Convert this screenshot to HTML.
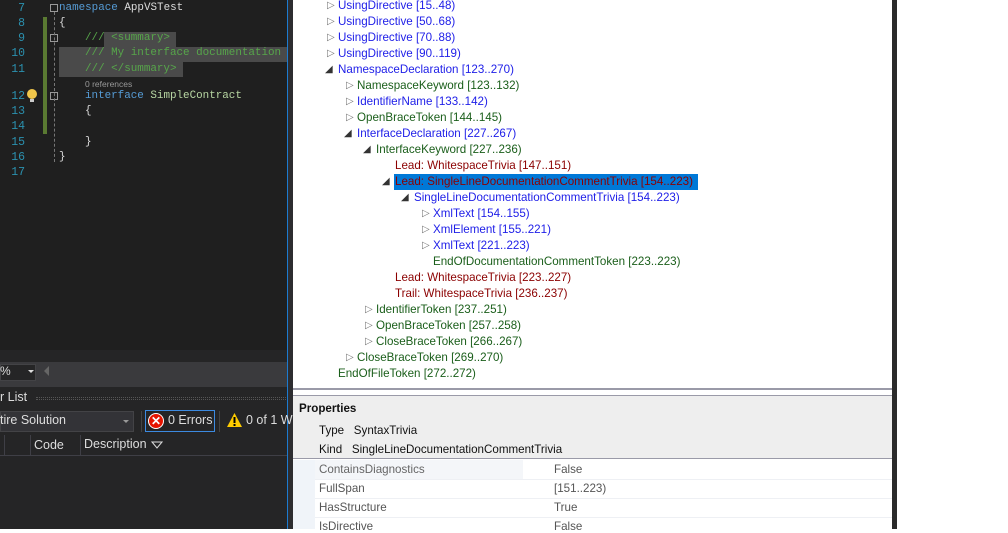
<!DOCTYPE html>
<html><head><meta charset="utf-8"><style>
*{margin:0;padding:0;box-sizing:border-box}
body{width:1008px;height:529px;overflow:hidden;background:#fff;position:relative;font-family:"Liberation Sans",sans-serif}
.a{position:absolute;white-space:nowrap}
.code{font-family:"Liberation Mono",monospace;font-size:10.9px;line-height:15px}
.ln{color:#2b91af;text-align:right;width:25px;font-size:11.5px}
.t{font-size:11.6px;line-height:16px;height:16px;margin-top:1px}
.b{color:#2020e8}.g{color:#1a5e1a}.r{color:#8b0000}
.tri{position:absolute;font-size:10px;color:#777;left:0}
.p{font-size:11.6px;color:#111}
</style></head><body>
<div class="a" style="left:0;top:0;width:287px;height:529px;background:#1f1f1f"></div>
<div class="a" style="left:287px;top:0;width:1px;height:529px;background:#1c7bd0"></div>
<div class="a" style="left:288px;top:0;width:5px;height:529px;background:#2d2d30"></div>
<div class="a" style="left:43px;top:17px;width:4px;height:117px;background:#5a7a32"></div>
<div class="a code ln" style="left:0;top:1px">7</div>
<div class="a code ln" style="left:0;top:16px">8</div>
<div class="a code ln" style="left:0;top:31px">9</div>
<div class="a code ln" style="left:0;top:46px">10</div>
<div class="a code ln" style="left:0;top:62px">11</div>
<div class="a code ln" style="left:0;top:89px">12</div>
<div class="a code ln" style="left:0;top:104px">13</div>
<div class="a code ln" style="left:0;top:119px">14</div>
<div class="a code ln" style="left:0;top:135px">15</div>
<div class="a code ln" style="left:0;top:150px">16</div>
<div class="a code ln" style="left:0;top:165px">17</div>
<div class="a" style="left:27px;top:89px;width:10px;height:10px;border-radius:50%;background:#f0c64a"></div>
<div class="a" style="left:30px;top:99px;width:4px;height:3px;background:#ccc"></div>
<div class="a" style="left:50px;top:4px;width:8px;height:8px;border:1px solid #999"></div>
<div class="a" style="left:50px;top:34px;width:8px;height:8px;border:1px solid #999"></div>
<div class="a" style="left:50px;top:92px;width:8px;height:8px;border:1px solid #999"></div>
<div class="a" style="left:54px;top:12px;width:1px;height:150px;border-left:1px dashed #777"></div>
<div class="a" style="left:104px;top:32px;width:72px;height:15px;background:#4a4a4a"></div>
<div class="a" style="left:59px;top:47px;width:228px;height:15px;background:#4a4a4a"></div>
<div class="a" style="left:59px;top:62px;width:124px;height:15px;background:#4a4a4a"></div>
<div class="a code" style="left:59px;top:1px;color:#dcdcdc"><span style="color:#569cd6">namespace</span> AppVSTest</div>
<div class="a code" style="left:59px;top:16px;color:#dcdcdc">{</div>
<div class="a code" style="left:85px;top:31px;color:#57a64a">/// &lt;summary&gt;</div>
<div class="a code" style="left:85px;top:46px;color:#57a64a">/// My interface documentation</div>
<div class="a code" style="left:85px;top:62px;color:#57a64a">/// &lt;/summary&gt;</div>
<div class="a" style="left:85px;top:79px;font-size:8.5px;color:#999">0 references</div>
<div class="a code" style="left:85px;top:89px;color:#dcdcdc"><span style="color:#569cd6">interface</span> <span style="color:#b8d7a3">SimpleContract</span></div>
<div class="a code" style="left:85px;top:104px;color:#dcdcdc">{</div>
<div class="a code" style="left:85px;top:135px;color:#dcdcdc">}</div>
<div class="a code" style="left:59px;top:150px;color:#dcdcdc">}</div>
<div class="a" style="left:0;top:350px;width:287px;height:12px;background:#252526"></div>
<div class="a" style="left:0;top:362px;width:287px;height:25px;background:#3a3a3d"></div>
<div class="a" style="left:0;top:364px;width:36px;height:17px;background:#252526;border:1px solid #434346"></div>
<div class="a" style="left:0;top:364px;color:#ddd;font-size:12px">%</div>
<div class="a" style="left:28px;top:370px;border:3px solid transparent;border-top:3px solid #ddd"></div>
<div class="a" style="left:44px;top:366px;border:5px solid transparent;border-right:5px solid #666;border-left:0"></div>
<div class="a" style="left:0;top:387px;width:287px;height:142px;background:#252526"></div>
<div class="a" style="left:0;top:390px;color:#ddd;font-size:12.5px">r List</div>
<div class="a" style="left:36px;top:397px;width:250px;height:3px;border-top:1px dotted #555;border-bottom:1px dotted #555"></div>
<div class="a" style="left:0;top:411px;width:134px;height:21px;background:#333337;border:1px solid #434346"></div>
<div class="a" style="left:0;top:413px;color:#ddd;font-size:12.5px">tire Solution</div>
<div class="a" style="left:123px;top:420px;border:3px solid transparent;border-top:3px solid #999"></div>
<div class="a" style="left:141px;top:411px;width:1px;height:21px;background:#444"></div>
<div class="a" style="left:145px;top:410px;width:70px;height:22px;border:1px solid #3c8ae0"></div>
<div class="a" style="left:148px;top:413px;width:16px;height:16px;border-radius:50%;background:#e51400;border:1px solid #fff;color:#fff;font-size:12px;font-weight:bold;text-align:center;line-height:14px">✕</div>
<div class="a" style="left:168px;top:413px;color:#ddd;font-size:12.5px">0 Errors</div>
<div class="a" style="left:219px;top:411px;width:1px;height:21px;background:#444"></div>
<svg class="a" style="left:226px;top:412px" width="17" height="16"><path d="M8.5 1 L16 15 L1 15 Z" fill="#fc0"/><rect x="7.5" y="5" width="2" height="6" fill="#000"/><rect x="7.5" y="12" width="2" height="2" fill="#000"/></svg>
<div class="a" style="left:246px;top:413px;color:#ddd;font-size:12.5px">0 of 1 W</div>
<div class="a" style="left:0;top:435px;width:287px;height:21px;border-bottom:1px solid #3f3f46"></div>
<div class="a" style="left:4px;top:435px;width:1px;height:20px;background:#3f3f46"></div>
<div class="a" style="left:30px;top:435px;width:1px;height:20px;background:#3f3f46"></div>
<div class="a" style="left:80px;top:435px;width:1px;height:20px;background:#3f3f46"></div>
<div class="a" style="left:34px;top:438px;color:#ddd;font-size:12.5px">Code</div>
<div class="a" style="left:84px;top:437px;color:#ddd;font-size:12.5px">Description</div>
<svg class="a" style="left:151px;top:441px" width="12" height="8"><path d="M1 1 L11 1 L6 7 Z" fill="none" stroke="#ddd"/></svg>
<div class="a" style="left:892px;top:0;width:5px;height:529px;background:#2b2b2b"></div>
<div class="a" style="left:394px;top:174px;width:304px;height:16px;background:#0078d7"></div>
<div class="a t" style="left:327px;top:-3px"><span class="tri">▷</span></div><div class="a t b" style="left:338px;top:-3px">UsingDirective [15..48)</div>
<div class="a t" style="left:327px;top:13px"><span class="tri">▷</span></div><div class="a t b" style="left:338px;top:13px">UsingDirective [50..68)</div>
<div class="a t" style="left:327px;top:29px"><span class="tri">▷</span></div><div class="a t b" style="left:338px;top:29px">UsingDirective [70..88)</div>
<div class="a t" style="left:327px;top:45px"><span class="tri">▷</span></div><div class="a t b" style="left:338px;top:45px">UsingDirective [90..119)</div>
<div class="a t" style="left:325px;top:61px"><span class="tri" style="color:#333">◢</span></div><div class="a t b" style="left:338px;top:61px">NamespaceDeclaration [123..270)</div>
<div class="a t" style="left:346px;top:77px"><span class="tri">▷</span></div><div class="a t g" style="left:357px;top:77px">NamespaceKeyword [123..132)</div>
<div class="a t" style="left:346px;top:93px"><span class="tri">▷</span></div><div class="a t b" style="left:357px;top:93px">IdentifierName [133..142)</div>
<div class="a t" style="left:346px;top:109px"><span class="tri">▷</span></div><div class="a t g" style="left:357px;top:109px">OpenBraceToken [144..145)</div>
<div class="a t" style="left:344px;top:125px"><span class="tri" style="color:#333">◢</span></div><div class="a t b" style="left:357px;top:125px">InterfaceDeclaration [227..267)</div>
<div class="a t" style="left:363px;top:141px"><span class="tri" style="color:#333">◢</span></div><div class="a t g" style="left:376px;top:141px">InterfaceKeyword [227..236)</div>
<div class="a t r" style="left:395px;top:157px">Lead: WhitespaceTrivia [147..151)</div>
<div class="a t" style="left:382px;top:173px"><span class="tri" style="color:#333">◢</span></div><div class="a t r" style="left:395px;top:173px">Lead: SingleLineDocumentationCommentTrivia [154..223)</div>
<div class="a t" style="left:401px;top:189px"><span class="tri" style="color:#333">◢</span></div><div class="a t b" style="left:414px;top:189px">SingleLineDocumentationCommentTrivia [154..223)</div>
<div class="a t" style="left:422px;top:205px"><span class="tri">▷</span></div><div class="a t b" style="left:433px;top:205px">XmlText [154..155)</div>
<div class="a t" style="left:422px;top:221px"><span class="tri">▷</span></div><div class="a t b" style="left:433px;top:221px">XmlElement [155..221)</div>
<div class="a t" style="left:422px;top:237px"><span class="tri">▷</span></div><div class="a t b" style="left:433px;top:237px">XmlText [221..223)</div>
<div class="a t g" style="left:433px;top:253px">EndOfDocumentationCommentToken [223..223)</div>
<div class="a t r" style="left:395px;top:269px">Lead: WhitespaceTrivia [223..227)</div>
<div class="a t r" style="left:395px;top:285px">Trail: WhitespaceTrivia [236..237)</div>
<div class="a t" style="left:365px;top:301px"><span class="tri">▷</span></div><div class="a t g" style="left:376px;top:301px">IdentifierToken [237..251)</div>
<div class="a t" style="left:365px;top:317px"><span class="tri">▷</span></div><div class="a t g" style="left:376px;top:317px">OpenBraceToken [257..258)</div>
<div class="a t" style="left:365px;top:333px"><span class="tri">▷</span></div><div class="a t g" style="left:376px;top:333px">CloseBraceToken [266..267)</div>
<div class="a t" style="left:346px;top:349px"><span class="tri">▷</span></div><div class="a t g" style="left:357px;top:349px">CloseBraceToken [269..270)</div>
<div class="a t g" style="left:338px;top:365px">EndOfFileToken [272..272)</div>
<div class="a" style="left:293px;top:388px;width:599px;height:2px;background:#9a9aa8"></div>
<div class="a" style="left:293px;top:395px;width:599px;height:64px;background:#eee;border-top:1px solid #9a9aa8;border-bottom:1px solid #9a9aa8"></div>
<div class="a p" style="left:299px;top:402px;font-weight:bold">Properties</div>
<div class="a p" style="left:319px;top:424px">Type&nbsp;&nbsp; SyntaxTrivia</div>
<div class="a p" style="left:319px;top:443px">Kind&nbsp;&nbsp; SingleLineDocumentationCommentTrivia</div>
<div class="a" style="left:293px;top:460px;width:22px;height:69px;background:#f0f4f9"></div>
<div class="a" style="left:315px;top:460px;width:208px;height:19px;background:#f4f6f9"></div>
<div class="a" style="left:315px;top:479px;width:577px;height:1px;background:#eef0f4"></div>
<div class="a" style="left:315px;top:498px;width:577px;height:1px;background:#eef0f4"></div>
<div class="a" style="left:315px;top:517px;width:577px;height:1px;background:#eef0f4"></div>
<div class="a p" style="left:319px;top:463px;color:#666">ContainsDiagnostics</div><div class="a p" style="left:554px;top:463px;color:#555">False</div>
<div class="a p" style="left:319px;top:482px;color:#555">FullSpan</div><div class="a p" style="left:554px;top:482px;color:#555">[151..223)</div>
<div class="a p" style="left:319px;top:501px;color:#555">HasStructure</div><div class="a p" style="left:554px;top:501px;color:#555">True</div>
<div class="a p" style="left:319px;top:520px;color:#555">IsDirective</div><div class="a p" style="left:554px;top:520px;color:#555">False</div>
</body></html>
